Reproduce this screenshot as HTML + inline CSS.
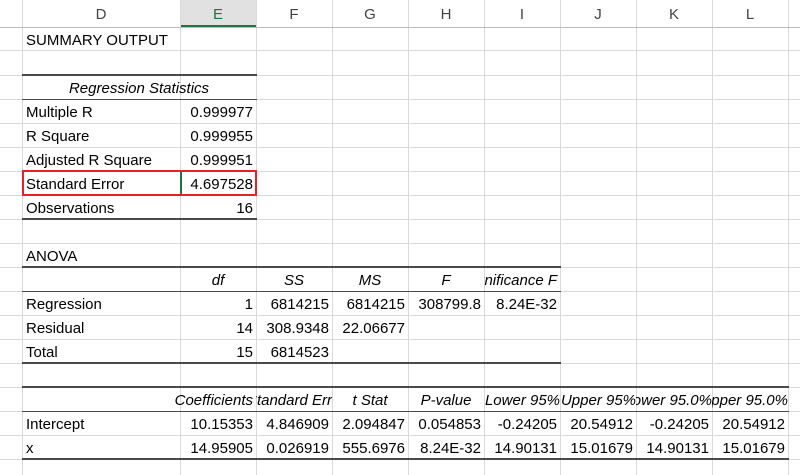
<!DOCTYPE html>
<html><head><style>
body{margin:0;width:800px;height:475px;overflow:hidden;background:#fff;font-family:"Liberation Sans",sans-serif;font-size:15px;color:#000;position:relative}
.c{position:absolute;height:24px;line-height:25px;white-space:nowrap;overflow:hidden;display:flex}
.l{justify-content:flex-start;padding-left:4px;box-sizing:border-box}
.r{justify-content:flex-end;padding-right:3px;box-sizing:border-box}
.m{justify-content:center}
.i{font-style:italic}
.h{position:absolute;top:0;height:28px;line-height:30px;text-align:center;color:#444;font-size:15px}
.ln{position:absolute;background:#4a4a4a}
</style></head><body>
<svg width="800" height="475" style="position:absolute;left:0;top:0">
<g stroke="#d9d9d9" stroke-width="1">
<line x1="22.5" y1="0" x2="22.5" y2="475"/>
<line x1="180.5" y1="0" x2="180.5" y2="475"/>
<line x1="256.5" y1="0" x2="256.5" y2="475"/>
<line x1="332.5" y1="0" x2="332.5" y2="475"/>
<line x1="408.5" y1="0" x2="408.5" y2="475"/>
<line x1="484.5" y1="0" x2="484.5" y2="475"/>
<line x1="560.5" y1="0" x2="560.5" y2="475"/>
<line x1="636.5" y1="0" x2="636.5" y2="475"/>
<line x1="712.5" y1="0" x2="712.5" y2="475"/>
<line x1="788.5" y1="0" x2="788.5" y2="475"/>
<line x1="0" y1="27.5" x2="800" y2="27.5" stroke="#bdbdbd"/>
<line x1="0" y1="50.5" x2="800" y2="50.5"/>
<line x1="0" y1="75.5" x2="800" y2="75.5"/>
<line x1="0" y1="99.5" x2="800" y2="99.5"/>
<line x1="0" y1="123.5" x2="800" y2="123.5"/>
<line x1="0" y1="147.5" x2="800" y2="147.5"/>
<line x1="0" y1="171.5" x2="800" y2="171.5"/>
<line x1="0" y1="195.5" x2="800" y2="195.5"/>
<line x1="0" y1="219.5" x2="800" y2="219.5"/>
<line x1="0" y1="243.5" x2="800" y2="243.5"/>
<line x1="0" y1="267.5" x2="800" y2="267.5"/>
<line x1="0" y1="291.5" x2="800" y2="291.5"/>
<line x1="0" y1="315.5" x2="800" y2="315.5"/>
<line x1="0" y1="339.5" x2="800" y2="339.5"/>
<line x1="0" y1="363.5" x2="800" y2="363.5"/>
<line x1="0" y1="387.5" x2="800" y2="387.5"/>
<line x1="0" y1="411.5" x2="800" y2="411.5"/>
<line x1="0" y1="435.5" x2="800" y2="435.5"/>
<line x1="0" y1="459.5" x2="800" y2="459.5"/>
</g>
</svg>
<div style="position:absolute;left:181px;top:0;width:75px;height:26px;background:#e1e1e1"></div>
<div style="position:absolute;left:181px;top:25px;width:75px;height:2px;background:#217346"></div>
<div class="h" style="left:22px;width:158px">D</div>
<div class="h" style="left:180px;width:76px;color:#217346">E</div>
<div class="h" style="left:256px;width:76px">F</div>
<div class="h" style="left:332px;width:76px">G</div>
<div class="h" style="left:408px;width:76px">H</div>
<div class="h" style="left:484px;width:76px">I</div>
<div class="h" style="left:560px;width:76px">J</div>
<div class="h" style="left:636px;width:76px">K</div>
<div class="h" style="left:712px;width:76px">L</div>

<div class="ln" style="left:22px;top:74px;width:235px;height:2px"></div>
<div class="ln" style="left:22px;top:99px;width:235px;height:1px"></div>
<div class="ln" style="left:22px;top:218px;width:235px;height:2px"></div>
<div class="ln" style="left:22px;top:266px;width:539px;height:2px"></div>
<div class="ln" style="left:22px;top:291px;width:539px;height:1px"></div>
<div class="ln" style="left:22px;top:362px;width:539px;height:2px"></div>
<div class="ln" style="left:22px;top:386px;width:767px;height:2px"></div>
<div class="ln" style="left:22px;top:411px;width:767px;height:1px"></div>
<div class="ln" style="left:22px;top:458px;width:767px;height:2px"></div>

<div class="c l" style="left:22px;top:28px;width:158px">SUMMARY OUTPUT</div>
<div class="c m i" style="left:22px;top:76px;width:234px">Regression Statistics</div>
<div class="c l" style="left:22px;top:100px;width:158px">Multiple R</div><div class="c r" style="left:180px;top:100px;width:76px">0.999977</div>
<div class="c l" style="left:22px;top:124px;width:158px">R Square</div><div class="c r" style="left:180px;top:124px;width:76px">0.999955</div>
<div class="c l" style="left:22px;top:148px;width:158px">Adjusted R Square</div><div class="c r" style="left:180px;top:148px;width:76px">0.999951</div>
<div class="c l" style="left:22px;top:172px;width:158px">Standard Error</div><div class="c r" style="left:180px;top:172px;width:76px">4.697528</div>
<div class="c l" style="left:22px;top:196px;width:158px">Observations</div><div class="c r" style="left:180px;top:196px;width:76px">16</div>
<div style="position:absolute;left:180px;top:171px;width:2px;height:25px;background:#217346"></div>
<div style="position:absolute;left:22px;top:170px;width:231px;height:22px;border:2px solid #e8202a"></div>

<div class="c l" style="left:22px;top:244px;width:158px">ANOVA</div>
<div class="c m i" style="left:180px;top:268px;width:76px">df</div>
<div class="c m i" style="left:256px;top:268px;width:76px">SS</div>
<div class="c m i" style="left:332px;top:268px;width:76px">MS</div>
<div class="c m i" style="left:408px;top:268px;width:76px">F</div>
<div class="c r i" style="left:484px;top:268px;width:90px;padding-right:17px">Significance F</div>
<div class="c l" style="left:22px;top:292px;width:158px">Regression</div>
<div class="c r" style="left:180px;top:292px;width:76px">1</div>
<div class="c r" style="left:256px;top:292px;width:76px">6814215</div>
<div class="c r" style="left:332px;top:292px;width:76px">6814215</div>
<div class="c r" style="left:408px;top:292px;width:76px">308799.8</div>
<div class="c r" style="left:484px;top:292px;width:76px">8.24E-32</div>
<div class="c l" style="left:22px;top:316px;width:158px">Residual</div>
<div class="c r" style="left:180px;top:316px;width:76px">14</div>
<div class="c r" style="left:256px;top:316px;width:76px">308.9348</div>
<div class="c r" style="left:332px;top:316px;width:76px">22.06677</div>
<div class="c l" style="left:22px;top:340px;width:158px">Total</div>
<div class="c r" style="left:180px;top:340px;width:76px">15</div>
<div class="c r" style="left:256px;top:340px;width:76px">6814523</div>

<div class="c r i" style="left:160px;top:388px;width:96px">Coefficients</div>
<div class="c r i" style="left:256px;top:388px;width:76px;padding-right:0">Standard Err</div>
<div class="c m i" style="left:332px;top:388px;width:76px">t Stat</div>
<div class="c m i" style="left:408px;top:388px;width:76px">P-value</div>
<div class="c r i" style="left:484px;top:388px;width:76px;padding-right:0">Lower 95%</div>
<div class="c r i" style="left:560px;top:388px;width:76px;padding-right:0">Upper 95%</div>
<div class="c r i" style="left:636px;top:388px;width:76px;padding-right:0">Lower 95.0%</div>
<div class="c r i" style="left:712px;top:388px;width:76px;padding-right:0">Upper 95.0%</div>
<div class="c l" style="left:22px;top:412px;width:158px">Intercept</div>
<div class="c r" style="left:180px;top:412px;width:76px">10.15353</div>
<div class="c r" style="left:256px;top:412px;width:76px">4.846909</div>
<div class="c r" style="left:332px;top:412px;width:76px">2.094847</div>
<div class="c r" style="left:408px;top:412px;width:76px">0.054853</div>
<div class="c r" style="left:484px;top:412px;width:76px">-0.24205</div>
<div class="c r" style="left:560px;top:412px;width:76px">20.54912</div>
<div class="c r" style="left:636px;top:412px;width:76px">-0.24205</div>
<div class="c r" style="left:712px;top:412px;width:76px">20.54912</div>
<div class="c l" style="left:22px;top:436px;width:158px">x</div>
<div class="c r" style="left:180px;top:436px;width:76px">14.95905</div>
<div class="c r" style="left:256px;top:436px;width:76px">0.026919</div>
<div class="c r" style="left:332px;top:436px;width:76px">555.6976</div>
<div class="c r" style="left:408px;top:436px;width:76px">8.24E-32</div>
<div class="c r" style="left:484px;top:436px;width:76px">14.90131</div>
<div class="c r" style="left:560px;top:436px;width:76px">15.01679</div>
<div class="c r" style="left:636px;top:436px;width:76px">14.90131</div>
<div class="c r" style="left:712px;top:436px;width:76px">15.01679</div>
</body></html>
